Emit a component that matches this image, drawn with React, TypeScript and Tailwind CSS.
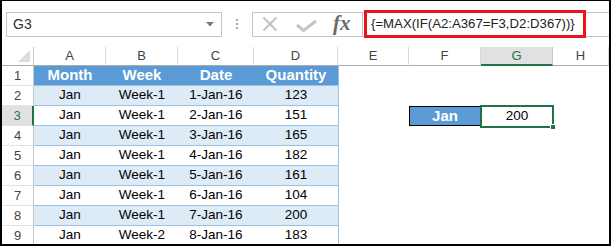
import React from "react";

const cols = ["A", "B", "C", "D", "E", "F", "G", "H"];

const data = [
  ["Jan", "Week-1", "1-Jan-16", "123"],
  ["Jan", "Week-1", "2-Jan-16", "151"],
  ["Jan", "Week-1", "3-Jan-16", "165"],
  ["Jan", "Week-1", "4-Jan-16", "182"],
  ["Jan", "Week-1", "5-Jan-16", "161"],
  ["Jan", "Week-1", "6-Jan-16", "104"],
  ["Jan", "Week-1", "7-Jan-16", "200"],
  ["Jan", "Week-2", "8-Jan-16", "183"],
];

const font = { fontFamily: '"Liberation Sans", Arial, sans-serif' };

function RowHead({ n }: { n: number }) {
  const sel = n === 3;
  return (
    <div
      className={`h-[20px] flex items-center justify-center text-[13px] border-b border-[#e4e4e4] ${
        sel
          ? "bg-[#e1e1e1] text-[#217346] border-r-2 border-r-[#217346]"
          : "bg-white text-[#444] border-r border-r-[#c8c8c8]"
      }`}
    >
      {n}
    </div>
  );
}

export default function App() {
  return (
    <div
      className="w-[611px] h-[246px] overflow-hidden bg-white border-t border-x-2 border-b-2 border-black"
      style={font}
    >
      {/* Toolbar: name box + formula bar */}
      <div className="h-[46px] flex items-center pl-[4px]">
        <div className="w-[216px] h-[25px] border border-[#c6c6c6] flex items-center justify-between pl-[6px] pr-[7px]">
          <span className="text-[14px] text-[#333]">G3</span>
          <svg width="8" height="5" viewBox="0 0 8 5">
            <polygon points="0,0 8,0 4,4.5" fill="#7a7a7a" />
          </svg>
        </div>
        <div className="w-[30px] flex flex-col items-center gap-[2px]">
          <span className="block w-[2px] h-[2px] bg-[#a8a8a8]" />
          <span className="block w-[2px] h-[2px] bg-[#a8a8a8]" />
          <span className="block w-[2px] h-[2px] bg-[#a8a8a8]" />
        </div>
        <div className="w-[111px] h-[25px] border border-[#c6c6c6] flex items-center pl-[9px]">
          <svg width="16" height="16" viewBox="0 0 16 16">
            <path d="M1.5 1.5 L14.5 14.5 M14.5 1.5 L1.5 14.5" stroke="#c4c4c4" strokeWidth="2.2" fill="none" />
          </svg>
          <svg width="21" height="12" viewBox="0 0 21 12" className="ml-[18px] mt-[4px]">
            <path d="M1 5 L7.5 10.5 L20 1" stroke="#c4c4c4" strokeWidth="3" fill="none" />
          </svg>
          <span
            className="ml-[16px] text-[21px] italic font-bold text-[#6a6a6a] leading-none -mt-[2px]"
            style={{ fontFamily: '"Liberation Serif", "Times New Roman", serif' }}
          >
            fx
          </span>
        </div>
        <div className="flex-1 h-[25px] border-y border-[#c6c6c6] flex items-center">
          <div className="w-[222px] h-[28px] ml-[1px] border-[3px] border-[#e8141c] flex items-center pl-[4px] text-[13.2px] text-[#222] whitespace-nowrap">
            {"{=MAX(IF(A2:A367=F3,D2:D367))}"}
          </div>
        </div>
      </div>

      {/* Sheet grid */}
      <div className="grid grid-cols-[32px_72px_72px_76px_84px_71px_72px_72px_1fr]">
        {/* corner */}
        <div className="h-[19px] border-b border-[#ababab] border-r border-r-[#c8c8c8] relative">
          <svg width="12" height="12" viewBox="0 0 12 12" className="absolute right-[3px] bottom-[3px]">
            <polygon points="12,0 12,12 0,12" fill="#dcdcdc" />
          </svg>
        </div>
        {cols.map((c) => (
          <div
            key={c}
            className={`h-[19px] flex items-center justify-center text-[13px] ${
              c === "G"
                ? "bg-[#e1e1e1] text-[#217346] border-b-2 border-[#217346] border-r border-r-[#c8c8c8]"
                : "text-[#444] border-b border-[#ababab] border-r border-r-[#d9d9d9]"
            }`}
          >
            {c}
          </div>
        ))}

        {/* row 1: table header */}
        <RowHead n={1} />
        {["Month", "Week", "Date", "Quantity"].map((h) => (
          <div
            key={h}
            className="h-[20px] bg-[#5b9bd5] text-white font-bold text-[15px] flex items-center justify-center border-b border-[#9bc2e6]"
          >
            {h}
          </div>
        ))}
        <div className="h-[20px] border-l border-[#9bc2e6]" />
        <div />
        <div />
        <div />

        {/* data rows */}
        {data.map((row, i) => {
          const n = i + 2;
          const band = i % 2 === 0 ? "bg-[#ddebf7]" : "bg-white";
          return (
            <React.Fragment key={n}>
              <RowHead n={n} />
              {row.map((v, j) => (
                <div
                  key={j}
                  className={`h-[20px] ${band} text-[13.5px] text-black flex items-center justify-center border-b border-[#9bc2e6]`}
                >
                  {v}
                </div>
              ))}
              <div className="h-[20px] border-l border-[#9bc2e6]" />
              {n === 3 ? (
                <>
                  <div className="h-[20px] bg-[#5b9bd5] border border-black text-white font-bold text-[15px] flex items-center justify-center">
                    Jan
                  </div>
                  <div className="h-[20px] relative flex items-center justify-center text-[13.5px] text-black">
                    200
                    <div className="absolute -left-[1px] -right-[1px] -top-[1px] -bottom-[2px] border-2 border-[#217346]" />
                    <div className="absolute -right-[3px] -bottom-[4px] w-[6px] h-[6px] bg-[#217346] border border-white" />
                  </div>
                </>
              ) : (
                <>
                  <div className="h-[20px]" />
                  <div className="h-[20px]" />
                </>
              )}
              <div className="h-[20px]" />
            </React.Fragment>
          );
        })}
      </div>
    </div>
  );
}
